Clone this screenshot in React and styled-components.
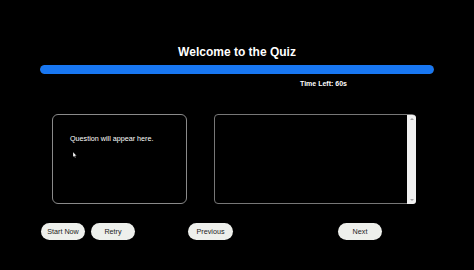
import React, { useState } from 'react';
import styled, { createGlobalStyle } from 'styled-components';

const GlobalStyle = createGlobalStyle`
  html, body {
    margin: 0;
    padding: 0;
    background: #000;
  }
  * {
    box-sizing: border-box;
  }
`;

const Page = styled.div`
  width: 474px;
  height: 270px;
  background: #000;
  color: #fff;
  font-family: "Liberation Sans", Arial, sans-serif;
  padding-top: 45px;
  overflow: hidden;
`;

const Title = styled.h1`
  margin: 0;
  font-size: 12px;
  line-height: 14px;
  font-weight: 700;
  text-align: center;
`;

const ProgressTrack = styled.div`
  margin: 6px 40px 0;
  height: 9px;
  border-radius: 5px;
  background: #333;
  overflow: hidden;
`;

const ProgressFill = styled.div`
  height: 100%;
  background: #1877f2;
  border-radius: 5px;
`;

const TimeLeft = styled.div`
  margin-top: 5px;
  padding-left: 300px;
  font-size: 7px;
  line-height: 9px;
  font-weight: 700;
`;

const Panels = styled.div`
  display: flex;
  gap: 27px;
  margin-top: 26px;
  padding-left: 52px;
`;

const QuestionBox = styled.div`
  position: relative;
  width: 135px;
  height: 90px;
  border: 1px solid #8a8a8a;
  border-radius: 6px;
  padding: 19px 0 0 17px;
`;

const QuestionText = styled.p`
  margin: 0;
  font-size: 7.2px;
  line-height: 9px;
`;

const Pointer = styled.svg`
  position: absolute;
  left: 20px;
  top: 37px;
`;

const AnswerWrap = styled.div`
  position: relative;
  width: 202px;
  height: 90px;
`;

const AnswerArea = styled.textarea`
  display: block;
  width: 100%;
  height: 100%;
  background: #000;
  color: #fff;
  border: 1px solid #777;
  border-radius: 4px;
  resize: none;
  font-family: "Liberation Sans", Arial, sans-serif;
  font-size: 7px;
  outline: none;
  padding: 4px 12px 4px 4px;
`;

/* the browser hides real scrollbars in the shot, so draw the strip */
const ScrollStrip = styled.div`
  position: absolute;
  top: 1px;
  right: 0;
  bottom: 0;
  width: 9px;
  background: #f1f1f1;
  border-radius: 0 3px 3px 0;
  display: flex;
  flex-direction: column;
  justify-content: space-between;
  align-items: center;
  padding: 3px 0;
  pointer-events: none;
`;

const Arrow = styled.span`
  width: 0;
  height: 0;
  border-left: 2px solid transparent;
  border-right: 2px solid transparent;
  border-${(p) => (p.$down ? 'top' : 'bottom')}: 2px solid #a3a3a3;
`;

const ButtonRow = styled.div`
  display: flex;
  margin-top: 19px;
  padding-left: 41px;
`;

const Button = styled.button`
  width: ${(p) => p.$w || 44}px;
  height: 17px;
  margin-left: ${(p) => p.$gap || 0}px;
  padding: 0;
  border: none;
  border-radius: 9px;
  background: #eef0ec;
  color: #222;
  font-family: "Liberation Sans", Arial, sans-serif;
  font-size: 7.2px;
  cursor: pointer;
`;

const App = () => {
  const [answer, setAnswer] = useState("");
  const timeLeft = 60;
  const progress = 100;

  return (
    <Page>
      <GlobalStyle />
      <Title>Welcome to the Quiz</Title>
      <ProgressTrack>
        <ProgressFill style={{ width: `${progress}%` }} />
      </ProgressTrack>
      <TimeLeft>Time Left: {timeLeft}s</TimeLeft>
      <Panels>
        <QuestionBox>
          <QuestionText>Question will appear here.</QuestionText>
          <Pointer width="4" height="6" viewBox="0 0 4 6">
            <path d="M0 0 L0 5 L1.2 4 L2 5.8 L2.8 5.4 L2 3.8 L3.6 3.8 Z" fill="#fff" stroke="#000" strokeWidth="0.3" />
          </Pointer>
        </QuestionBox>
        <AnswerWrap>
          <AnswerArea value={answer} onChange={(e) => setAnswer(e.target.value)} />
          <ScrollStrip>
            <Arrow />
            <Arrow $down />
          </ScrollStrip>
        </AnswerWrap>
      </Panels>
      <ButtonRow>
        <Button>Start Now</Button>
        <Button $gap={6}>Retry</Button>
        <Button $gap={53} $w={45}>Previous</Button>
        <Button $gap={105}>Next</Button>
      </ButtonRow>
    </Page>
  );
};

export default App;
